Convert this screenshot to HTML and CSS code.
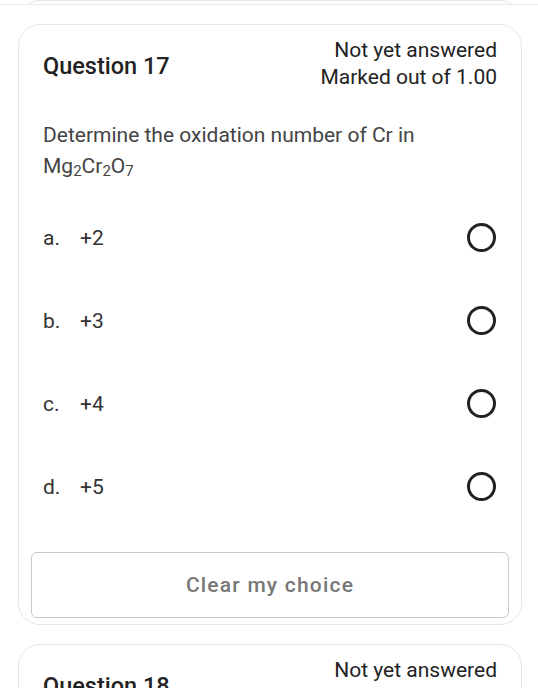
FILE: index.html
```html
<!DOCTYPE html>
<html lang="en">
<head>
    <meta charset="UTF-8">
    <meta name="viewport" content="width=device-width, initial-scale=1.0">
    <title>Quiz</title>
    <link rel="stylesheet" href="styles.css">
</head>
<body>
    <div class="prev-edge">
        <div class="card prev-card"></div>
    </div>

    <div class="card">
        <div class="q-header">
            <h2 class="q-title">Question 17</h2>
            <div class="q-status">
                <div>Not yet answered</div>
                <div>Marked out of 1.00</div>
            </div>
        </div>

        <div class="q-text">
            Determine the oxidation number of Cr in<br>
            Mg<sub>2</sub>Cr<sub>2</sub>O<sub>7</sub>
        </div>

        <div class="answers">
            <label class="answer">
                <span class="letter">a.</span>
                <span class="value">+2</span>
                <span class="radio"></span>
            </label>
            <label class="answer">
                <span class="letter">b.</span>
                <span class="value">+3</span>
                <span class="radio"></span>
            </label>
            <label class="answer">
                <span class="letter">c.</span>
                <span class="value">+4</span>
                <span class="radio"></span>
            </label>
            <label class="answer">
                <span class="letter">d.</span>
                <span class="value">+5</span>
                <span class="radio"></span>
            </label>
        </div>

        <button class="clear-btn">Clear my choice</button>
    </div>

    <div class="card">
        <div class="q-header">
            <h2 class="q-title next-title">Question 18</h2>
            <div class="q-status">
                <div>Not yet answered</div>
                <div>Marked out of 1.00</div>
            </div>
        </div>
    </div>
</body>
</html>
```

FILE: styles.css
```css
body {
    font-family: Roboto, "Noto Sans", Arial, sans-serif;
    margin: 0;
    padding: 0;
    background-color: #fff;
    color: #222;
}

/* bottom of the previous question, mostly scrolled away */
.prev-edge {
    height: 4px;
    overflow: hidden;
    border-bottom: 1px solid #ececec;
    margin-bottom: 19px;
}

.prev-card {
    height: 30px;
    margin: -26px 24px 0 24px;
}

.card {
    border: 1px solid #e6e6e6;
    border-radius: 22px;
    margin: 0 16px 19px 18px;
    padding: 12px 24px 6px 24px;
}

.q-header {
    display: flex;
    align-items: center;
    justify-content: space-between;
}

.q-title {
    font-size: 23.5px;
    font-weight: 500;
    margin: 0;
    padding-top: 4px;
}

.q-status {
    text-align: right;
    font-size: 21px;
    line-height: 27px;
    color: #222;
}

.q-text {
    margin-top: 29px;
    font-size: 21px;
    line-height: 31px;
    color: #444;
}

.q-text sub {
    font-size: 15px;
    vertical-align: -3px;
    line-height: 0;
}

.answers {
    margin-top: 14px;
}

.answer {
    display: flex;
    align-items: center;
    height: 83px;
    font-size: 21px;
    color: #333;
}

.letter {
    width: 37px;
}

.value {
    flex: 1;
}

.radio {
    width: 23px;
    height: 23px;
    border: 3px solid #222;
    border-radius: 50%;
    margin-right: 1px;
}

.clear-btn {
    display: block;
    width: calc(100% + 24px);
    margin: 24px -12px 0 -12px;
    height: 66px;
    border: 1px solid #c9c9c9;
    border-radius: 6px;
    background: #fff;
    font-family: inherit;
    font-size: 21px;
    font-weight: 500;
    letter-spacing: 1.2px;
    color: #777;
}
```
